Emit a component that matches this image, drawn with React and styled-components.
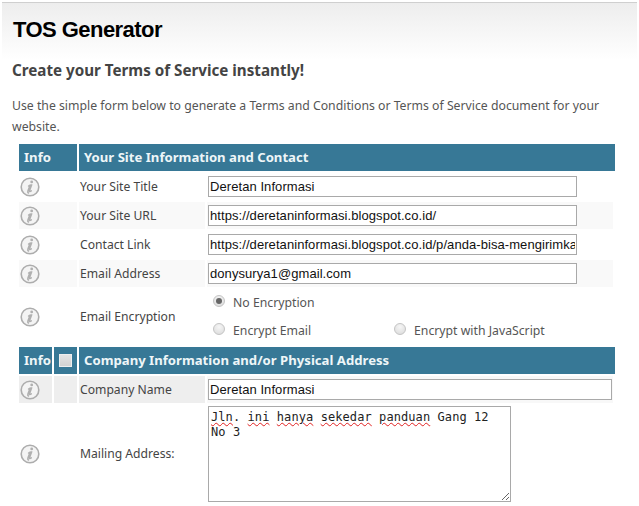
import React from "react";
import styled, { createGlobalStyle } from "styled-components";

const Global = createGlobalStyle`
  html, body { margin: 0; padding: 0; background: #fff; }
  body { font-family: "Noto Sans", "Open Sans", sans-serif; overflow: hidden; }
`;
const Page = styled.div`
  width: 639px; height: 506px; padding-top: 2px; box-sizing: border-box; overflow: hidden;
`;
const TitleBar = styled.header`
  margin: 0 2px; height: 58px; box-sizing: border-box; padding: 13px 0 0 11px;
  border-top: 1px solid #cfcfcf;
  background: linear-gradient(#ededed, #ffffff);
`;
const Title = styled.h1`
  margin: 0; font: bold 22px/28px "Liberation Sans", Arial, sans-serif; letter-spacing: -0.55px; color: #000;
`;
const Subtitle = styled.h2`
  margin: 0; padding: 0 0 0 12px; font: bold 15.2px/20px "Noto Sans", sans-serif; color: #444;
`;
const Intro = styled.p`
  margin: 15px 0 0; padding: 0 30px 0 12px; font: 12.25px/21px "Noto Sans", sans-serif; color: #555;
`;
const Table = styled.table`
  margin: 5px 0 0 17px; width: 600px; table-layout: fixed;
  border-collapse: separate; border-spacing: 2px;
  font-size: 12px; color: #444;
`;
const HeadCell = styled.th`
  height: 27px; padding: 0 0 0 5px; box-sizing: border-box; text-align: left;
  background: #377896; color: #eef6f8; font: bold 13.15px/27px "Noto Sans", sans-serif; white-space: nowrap; overflow: hidden;
`;
const IconCell = styled.td`
  padding: 0; text-align: center; background: ${(p) => p.$bg || "transparent"};
  svg { display: block; margin: 0 0 0 1px; }
`;
const LabelCell = styled.td`
  padding: 0 0 0 1px; height: ${(p) => p.$h || 27}px; box-sizing: border-box; font: 12.15px/16px "Noto Sans", sans-serif; color: #444; background: ${(p) => p.$bg || "transparent"};
`;
const FieldCell = styled.td`
  padding: 0 0 0 1px; border-right: 2px solid transparent; background: ${(p) => p.$bg || "transparent"}; background-clip: padding-box;
  vertical-align: ${(p) => p.$top ? "top" : "middle"};
`;
const TextInput = styled.input`
  display: block; box-sizing: border-box; width: ${(p) => p.$w || 369}px; height: 21px; padding: 0 1px; margin: 0;
  border: 1px solid #a9a9a9; background: #fff; border-radius: 0; outline: none; color: #111;
  font: 13px "Liberation Sans", Arial, sans-serif; letter-spacing: 0.07px;
`;
const Memo = styled.div`
  box-sizing: border-box; width: 303px; height: 96px; margin-top: 1px; padding: 3px 2px;
  border: 1px solid #a9a9a9; background: #fff; color: #222; overflow: hidden; resize: both;
  font: 12px/15px "DejaVu Sans Mono", monospace; letter-spacing: 0.08px; white-space: pre-wrap;
`;
const Misspelt = styled.span`
  text-decoration: underline wavy #e02020 1px;
  text-underline-offset: 1px;
`;
const RadioGrid = styled.div`
  display: grid; grid-template-columns: 181px auto; grid-template-rows: 28px 28px; margin-left: 5px;
`;
const RadioLabel = styled.label`
  display: flex; align-items: center; gap: 8px; font: 12.25px/16px "Noto Sans", sans-serif; color: #555;
`;
const Radio = styled.span`
  width: 12px; height: 12px; box-sizing: border-box; border-radius: 50%; flex: none; position: relative; top: -2px;
  border: 1px solid #c4c4c4; background: radial-gradient(circle at 50% 30%, #f6f6f6, #d9d9d9);
  display: flex; align-items: center; justify-content: center;
  &::after { content: ""; width: 6px; height: 6px; border-radius: 50%; background: ${(p) => p.$on ? "#666" : "transparent"}; }
`;
const FlagBox = styled.span`
  display: block; width: 11px; height: 11px; margin: 0 auto; background: linear-gradient(#e4e4e4, #d2d2d2); border: 1px solid #eee;
`;
const FlagCell = styled.th`
  padding: 0; background: #377896;
`;

const Info = () => (
  <svg width="20" height="20" viewBox="0 0 20 20" aria-hidden="true">
    <circle cx="10" cy="10" r="8.8" fill="#f4f4f4" stroke="#adadad" strokeWidth="1.6" />
    <circle cx="11.7" cy="4.9" r="1.4" fill="#b0b0b0" />
    <path d="M8.6 9 Q10.4 7.6 11.6 8 L9.4 14 Q9.4 15 11.3 13.8 M8.4 16 Q7.4 15.4 7.9 14 L10 8.6" fill="none" stroke="#b0b0b0" strokeWidth="1.5" strokeLinecap="round" />
  </svg>
);

const fields = [
  ["Your Site Title", "Deretan Informasi"],
  ["Your Site URL", "https://deretaninformasi.blogspot.co.id/"],
  ["Contact Link", "https://deretaninformasi.blogspot.co.id/p/anda-bisa-mengirimkan-pesan"],
  ["Email Address", "donysurya1@gmail.com"],
];

export default function App() {
  return (
    <Page>
      <Global />
      <TitleBar><Title>TOS Generator</Title></TitleBar>
      <Subtitle>Create your Terms of Service instantly!</Subtitle>
      <Intro>Use the simple form below to generate a Terms and Conditions or Terms of Service document for your website.</Intro>
      <Table>
        <colgroup>
          <col style={{ width: 33 }} /><col style={{ width: 23 }} /><col style={{ width: 126 }} /><col />
        </colgroup>
        <tbody>
          <tr>
            <HeadCell colSpan={2}>Info</HeadCell>
            <HeadCell colSpan={2}>Your Site Information and Contact</HeadCell>
          </tr>
          {fields.map(([label, value], i) => {
            const bg = i % 2 ? "#f9f9f9" : undefined;
            return (
              <tr key={label}>
                <IconCell colSpan={2} $bg={bg}><Info /></IconCell>
                <LabelCell $bg={bg}>{label}</LabelCell>
                <FieldCell $bg={bg}><TextInput defaultValue={value} readOnly /></FieldCell>
              </tr>
            );
          })}
          <tr>
            <IconCell colSpan={2}><Info /></IconCell>
            <LabelCell $h={56}>Email Encryption</LabelCell>
            <FieldCell>
              <RadioGrid>
                <RadioLabel><Radio $on />No Encryption</RadioLabel>
                <span />
                <RadioLabel><Radio />Encrypt Email</RadioLabel>
                <RadioLabel><Radio />Encrypt with JavaScript</RadioLabel>
              </RadioGrid>
            </FieldCell>
          </tr>
          <tr>
            <HeadCell>Info</HeadCell>
            <FlagCell><FlagBox /></FlagCell>
            <HeadCell colSpan={2}>Company Information and/or Physical Address</HeadCell>
          </tr>
          <tr>
            <IconCell $bg="#eeeeee"><Info /></IconCell>
            <IconCell $bg="#eeeeee" />
            <LabelCell $bg="#eeeeee">Company Name</LabelCell>
            <FieldCell $bg="#f8f8f8"><TextInput $w={404} defaultValue="Deretan Informasi" readOnly /></FieldCell>
          </tr>
          <tr>
            <IconCell><Info /></IconCell>
            <IconCell />
            <LabelCell $h={98}>Mailing Address:</LabelCell>
            <FieldCell $top>
              <Memo><Misspelt>Jln</Misspelt>. <Misspelt>ini</Misspelt> <Misspelt>hanya</Misspelt> <Misspelt>sekedar</Misspelt> <Misspelt>panduan</Misspelt> Gang 12{"\n"}No 3</Memo>
            </FieldCell>
          </tr>
        </tbody>
      </Table>
    </Page>
  );
}
